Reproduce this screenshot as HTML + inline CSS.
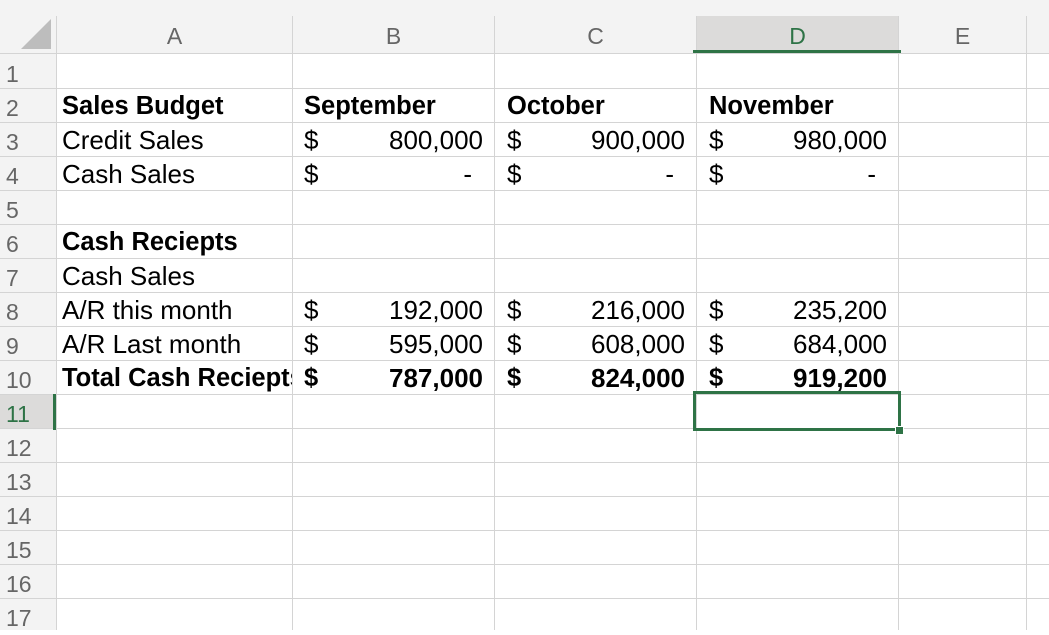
<!DOCTYPE html>
<html><head><style>
body{margin:0;width:1049px;height:630px;overflow:hidden;background:#fff;font-family:"Liberation Sans",Arial,sans-serif;position:relative}
.a{position:absolute}
.hl{position:absolute;left:0;width:1049px;height:1px;background:#d4d4d4}
.vl{position:absolute;top:16px;height:614px;width:1px;background:#d4d4d4}
.rn{position:absolute;left:0;width:53px;font-size:23px;color:#666;padding-left:6px;box-sizing:border-box;line-height:34px}
.ch{position:absolute;top:16px;height:37px;line-height:40px;text-align:center;font-size:23px;color:#666}
.t{position:absolute;font-size:26px;color:#000;line-height:34px;white-space:nowrap}
.b{font-weight:bold;font-size:25.5px}
.r{text-align:right}
</style></head><body>
<div class="a" style="left:0;top:0;width:1049px;height:53px;background:#f3f3f3"></div>
<div class="a" style="left:0;top:53px;width:56px;height:577px;background:#f3f3f3"></div>
<div class="a" style="left:697px;top:16px;width:201px;height:37px;background:#dcdbda"></div>
<div class="a" style="left:0;top:394px;width:56px;height:34px;background:#dcdbda"></div>
<svg class="a" style="left:20px;top:18px" width="32" height="32"><polygon points="31,1 31,31 1,31" fill="#bdbdbd"/></svg>
<div class="hl" style="top:53px"></div>
<div class="hl" style="top:88px"></div><div class="hl" style="top:122px"></div><div class="hl" style="top:156px"></div><div class="hl" style="top:190px"></div><div class="hl" style="top:224px"></div><div class="hl" style="top:258px"></div><div class="hl" style="top:292px"></div><div class="hl" style="top:326px"></div><div class="hl" style="top:360px"></div><div class="hl" style="top:394px"></div><div class="hl" style="top:428px"></div><div class="hl" style="top:462px"></div><div class="hl" style="top:496px"></div><div class="hl" style="top:530px"></div><div class="hl" style="top:564px"></div><div class="hl" style="top:598px"></div>
<div class="vl" style="left:56px"></div><div class="vl" style="left:292px"></div><div class="vl" style="left:494px"></div><div class="vl" style="left:696px"></div><div class="vl" style="left:898px"></div><div class="vl" style="left:1026px"></div>
<div class="a" style="left:693px;top:50px;width:208px;height:3px;background:#2e7346"></div>
<div class="a" style="left:53px;top:394px;width:3px;height:36px;background:#2e7346"></div>
<div class="ch" style="left:57px;width:235px">A</div>
<div class="ch" style="left:293px;width:201px">B</div>
<div class="ch" style="left:495px;width:201px">C</div>
<div class="ch" style="left:697px;width:201px;color:#2e7346">D</div>
<div class="ch" style="left:899px;width:127px">E</div>
<div class="rn" style="top:57px">1</div><div class="rn" style="top:91px">2</div><div class="rn" style="top:125px">3</div><div class="rn" style="top:159px">4</div><div class="rn" style="top:193px">5</div><div class="rn" style="top:227px">6</div><div class="rn" style="top:261px">7</div><div class="rn" style="top:295px">8</div><div class="rn" style="top:329px">9</div><div class="rn" style="top:363px">10</div><div class="rn" style="top:397px;color:#2e7346">11</div><div class="rn" style="top:431px">12</div><div class="rn" style="top:465px">13</div><div class="rn" style="top:499px">14</div><div class="rn" style="top:533px">15</div><div class="rn" style="top:567px">16</div><div class="rn" style="top:601px">17</div>
<div class="t b" style="left:62px;top:89px">Sales Budget</div>
<div class="t b" style="left:304px;top:89px">September</div>
<div class="t b" style="left:507px;top:89px">October</div>
<div class="t b" style="left:709px;top:89px">November</div>
<div class="t" style="left:62px;top:123px">Credit Sales</div>
<div class="t" style="left:62px;top:157px">Cash Sales</div>
<div class="t b" style="left:62px;top:225px">Cash Reciepts</div>
<div class="t" style="left:62px;top:259px">Cash Sales</div>
<div class="t" style="left:62px;top:293px">A/R this month</div>
<div class="t" style="left:62px;top:327px">A/R Last month</div>
<div class="t b" style="left:62px;top:361px;width:230px;overflow:hidden">Total Cash Reciepts</div>
<div class="t" style="left:304px;top:123px">$</div><div class="t" style="left:507px;top:123px">$</div><div class="t" style="left:709px;top:123px">$</div>
<div class="t" style="left:304px;top:157px">$</div><div class="t" style="left:507px;top:157px">$</div><div class="t" style="left:709px;top:157px">$</div>
<div class="t" style="left:304px;top:293px">$</div><div class="t" style="left:507px;top:293px">$</div><div class="t" style="left:709px;top:293px">$</div>
<div class="t" style="left:304px;top:327px">$</div><div class="t" style="left:507px;top:327px">$</div><div class="t" style="left:709px;top:327px">$</div>
<div class="t b" style="left:304px;top:361px">$</div><div class="t b" style="left:507px;top:361px">$</div><div class="t b" style="left:709px;top:361px">$</div>
<div class="t r" style="left:300px;width:183px;top:123px">800,000</div>
<div class="t r" style="left:502px;width:183px;top:123px">900,000</div>
<div class="t r" style="left:704px;width:183px;top:123px">980,000</div>
<div class="t r" style="left:300px;width:172px;top:157px">-</div>
<div class="t r" style="left:502px;width:172px;top:157px">-</div>
<div class="t r" style="left:704px;width:172px;top:157px">-</div>
<div class="t r" style="left:300px;width:183px;top:293px">192,000</div>
<div class="t r" style="left:502px;width:183px;top:293px">216,000</div>
<div class="t r" style="left:704px;width:183px;top:293px">235,200</div>
<div class="t r" style="left:300px;width:183px;top:327px">595,000</div>
<div class="t r" style="left:502px;width:183px;top:327px">608,000</div>
<div class="t r" style="left:704px;width:183px;top:327px">684,000</div>
<div class="t r b" style="left:300px;width:183px;top:361px;font-size:26px">787,000</div>
<div class="t r b" style="left:502px;width:183px;top:361px;font-size:26px">824,000</div>
<div class="t r b" style="left:704px;width:183px;top:361px;font-size:26px">919,200</div>
<div class="a" style="left:693px;top:391px;width:202px;height:34px;border:3px solid #2e7346"></div>
<div class="a" style="left:895px;top:426px;width:7px;height:7px;background:#2e7346;border:1px solid #fff"></div>
</body></html>
